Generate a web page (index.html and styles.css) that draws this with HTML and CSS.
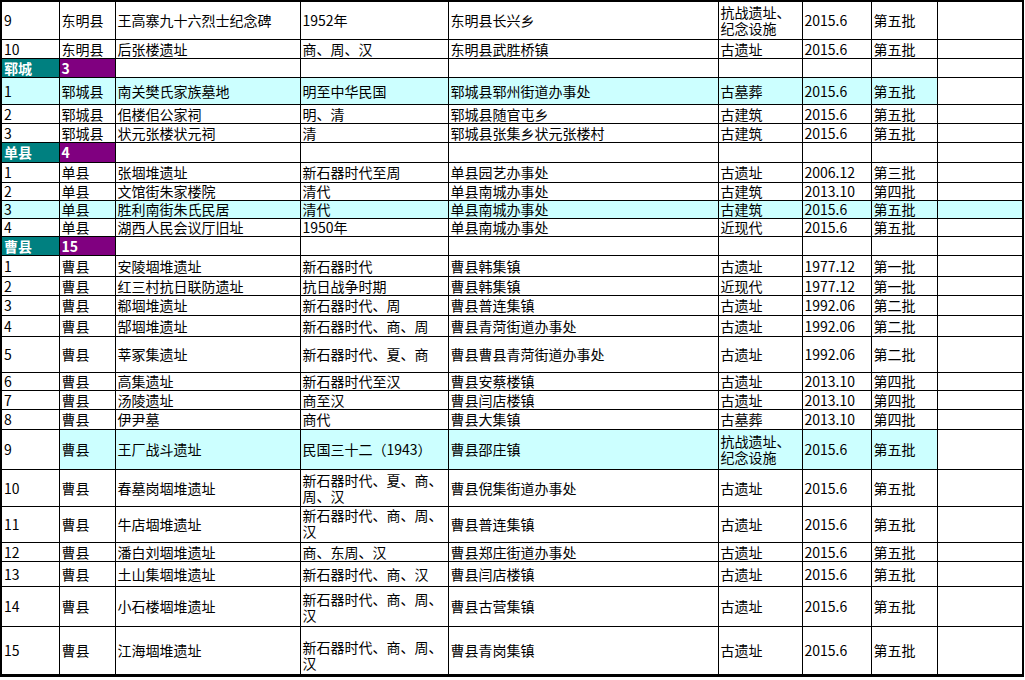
FILE: index.html
```html
<!DOCTYPE html>
<html lang="zh-CN">
<head>
<meta charset="utf-8">
<title>文物保护单位名录</title>
<link rel="stylesheet" href="styles.css">
</head>
<body>
<table class="sheet">
<colgroup>
<col class="c1"><col class="c2"><col class="c3"><col class="c4"><col class="c5"><col class="c6"><col class="c7"><col class="c8"><col class="c9">
</colgroup>
<tbody>
<tr class="h38"><td>9</td><td>东明县</td><td>王高寨九十六烈士纪念碑</td><td>1952年</td><td>东明县长兴乡</td><td>抗战遗址、纪念设施</td><td>2015.6</td><td>第五批</td><td></td></tr>
<tr class="h19"><td>10</td><td>东明县</td><td>后张楼遗址</td><td>商、周、汉</td><td>东明县武胜桥镇</td><td>古遗址</td><td>2015.6</td><td>第五批</td><td></td></tr>
<tr class="h19 group"><td class="g-name">郓城</td><td class="g-count">3</td><td></td><td></td><td></td><td></td><td></td><td></td><td></td></tr>
<tr class="h27 hl"><td>1</td><td>郓城县</td><td>南关樊氏家族墓地</td><td>明至中华民国</td><td>郓城县郓州街道办事处</td><td>古墓葬</td><td>2015.6</td><td>第五批</td><td class="plain"></td></tr>
<tr class="h19"><td>2</td><td>郓城县</td><td>佀楼佀公家祠</td><td>明、清</td><td>郓城县随官屯乡</td><td>古建筑</td><td>2015.6</td><td>第五批</td><td></td></tr>
<tr class="h19"><td>3</td><td>郓城县</td><td>状元张楼状元祠</td><td>清</td><td>郓城县张集乡状元张楼村</td><td>古建筑</td><td>2015.6</td><td>第五批</td><td></td></tr>
<tr class="h20 group"><td class="g-name">单县</td><td class="g-count">4</td><td></td><td></td><td></td><td></td><td></td><td></td><td></td></tr>
<tr class="h20"><td>1</td><td>单县</td><td>张堌堆遗址</td><td>新石器时代至周</td><td>单县园艺办事处</td><td>古遗址</td><td>2006.12</td><td>第三批</td><td></td></tr>
<tr class="h18"><td>2</td><td>单县</td><td>文馆街朱家楼院</td><td>清代</td><td>单县南城办事处</td><td>古建筑</td><td>2013.10</td><td>第四批</td><td></td></tr>
<tr class="h18 hl"><td>3</td><td>单县</td><td>胜利南街朱氏民居</td><td>清代</td><td>单县南城办事处</td><td>古建筑</td><td>2015.6</td><td>第五批</td><td></td></tr>
<tr class="h18"><td>4</td><td>单县</td><td>湖西人民会议厅旧址</td><td>1950年</td><td>单县南城办事处</td><td>近现代</td><td>2015.6</td><td>第五批</td><td></td></tr>
<tr class="h19 group"><td class="g-name">曹县</td><td class="g-count">15</td><td></td><td></td><td></td><td></td><td></td><td></td><td></td></tr>
<tr class="h21"><td>1</td><td>曹县</td><td>安陵堌堆遗址</td><td>新石器时代</td><td>曹县韩集镇</td><td>古遗址</td><td>1977.12</td><td>第一批</td><td></td></tr>
<tr class="h19"><td>2</td><td>曹县</td><td>红三村抗日联防遗址</td><td>抗日战争时期</td><td>曹县韩集镇</td><td>近现代</td><td>1977.12</td><td>第一批</td><td></td></tr>
<tr class="h20"><td>3</td><td>曹县</td><td>郗堌堆遗址</td><td>新石器时代、周</td><td>曹县普连集镇</td><td>古遗址</td><td>1992.06</td><td>第二批</td><td></td></tr>
<tr class="h21"><td>4</td><td>曹县</td><td>郜堌堆遗址</td><td>新石器时代、商、周</td><td>曹县青菏街道办事处</td><td>古遗址</td><td>1992.06</td><td>第二批</td><td></td></tr>
<tr class="h36"><td>5</td><td>曹县</td><td>莘冢集遗址</td><td>新石器时代、夏、商</td><td>曹县曹县青菏街道办事处</td><td>古遗址</td><td>1992.06</td><td>第二批</td><td></td></tr>
<tr class="h18"><td>6</td><td>曹县</td><td>高集遗址</td><td>新石器时代至汉</td><td>曹县安蔡楼镇</td><td>古遗址</td><td>2013.10</td><td>第四批</td><td></td></tr>
<tr class="h19"><td>7</td><td>曹县</td><td>汤陵遗址</td><td>商至汉</td><td>曹县闫店楼镇</td><td>古遗址</td><td>2013.10</td><td>第四批</td><td></td></tr>
<tr class="h20"><td>8</td><td>曹县</td><td>伊尹墓</td><td>商代</td><td>曹县大集镇</td><td>古墓葬</td><td>2013.10</td><td>第四批</td><td></td></tr>
<tr class="h40 hl"><td class="plain">9</td><td>曹县</td><td>王厂战斗遗址</td><td>民国三十二（1943）</td><td>曹县邵庄镇</td><td>抗战遗址、纪念设施</td><td>2015.6</td><td>第五批</td><td class="plain"></td></tr>
<tr class="h37"><td>10</td><td>曹县</td><td>春墓岗堌堆遗址</td><td>新石器时代、夏、商、周、汉</td><td>曹县倪集街道办事处</td><td>古遗址</td><td>2015.6</td><td>第五批</td><td></td></tr>
<tr class="h36"><td>11</td><td>曹县</td><td>牛店堌堆遗址</td><td class="top">新石器时代、商、周、汉</td><td>曹县普连集镇</td><td>古遗址</td><td>2015.6</td><td>第五批</td><td></td></tr>
<tr class="h19"><td>12</td><td>曹县</td><td>潘白刘堌堆遗址</td><td>商、东周、汉</td><td>曹县郑庄街道办事处</td><td>古遗址</td><td>2015.6</td><td>第五批</td><td></td></tr>
<tr class="h25"><td>13</td><td>曹县</td><td>土山集堌堆遗址</td><td>新石器时代、商、汉</td><td>曹县闫店楼镇</td><td>古遗址</td><td>2015.6</td><td>第五批</td><td></td></tr>
<tr class="h40"><td>14</td><td>曹县</td><td>小石楼堌堆遗址</td><td class="bottom">新石器时代、商、周、汉</td><td>曹县古营集镇</td><td>古遗址</td><td>2015.6</td><td>第五批</td><td></td></tr>
<tr class="h49"><td>15</td><td>曹县</td><td>江海堌堆遗址</td><td class="bottom">新石器时代、商、周、汉</td><td>曹县青岗集镇</td><td>古遗址</td><td>2015.6</td><td>第五批</td><td></td></tr>
</tbody>
</table>
</body>
</html>
```
FILE: styles.css
```css
html, body {
  margin: 0;
  padding: 0;
  background: #ffffff;
}

body {
  font-family: "Noto Sans CJK SC", "Noto Sans", sans-serif;
  font-size: 14px;
  line-height: 16px;
  color: #000000;
}

.sheet {
  border-collapse: collapse;
  table-layout: fixed;
  width: 1024px;
  border-top: 2px solid #000;
  border-left: 2px solid #000;
  border-right: 2px solid #000;
  border-bottom: 3px solid #000;
}

.c1 { width: 58px; }
.c2 { width: 56px; }
.c3 { width: 185px; }
.c4 { width: 148px; }
.c5 { width: 270px; }
.c6 { width: 84px; }
.c7 { width: 69px; }
.c8 { width: 66px; }
.c9 { width: 86px; }

.sheet td {
  border: 1px solid #000;
  padding: 0 1px 0 2px;
  vertical-align: middle;
  text-align: left;
  white-space: normal;
  word-break: break-all;
  overflow: hidden;
}

.sheet td.top { vertical-align: top; }
.sheet td.bottom { vertical-align: bottom; padding-bottom: 3px; }

.h18 { height: 18px; }
.h19 { height: 19px; }
.h20 { height: 20px; }
.h21 { height: 21px; }
.h25 { height: 25px; }
.h27 { height: 27px; }
.h36 { height: 36px; }
.h37 { height: 37px; }
.h38 { height: 38px; }
.h40 { height: 40px; }
.h49 { height: 49px; }

.hl td { background: #ccffff; }
.hl td.plain { background: #ffffff; }

.group td.g-name {
  background: #008080;
  color: #ffffff;
  font-weight: bold;
}

.group td.g-count {
  background: #800080;
  color: #ffffff;
  font-weight: bold;
}
```
